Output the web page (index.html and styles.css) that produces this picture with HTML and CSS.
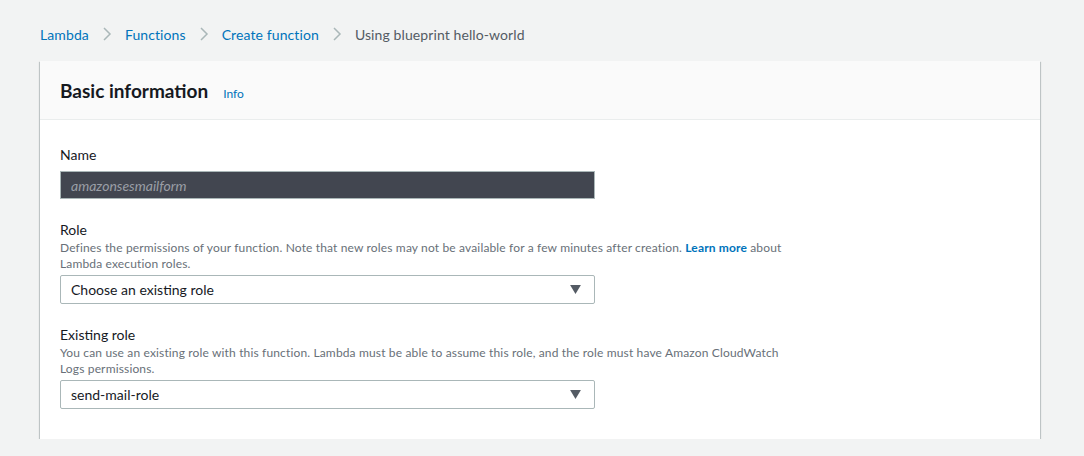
FILE: index.html
```html
<!DOCTYPE html>
<html lang="en">
<head>
<link rel="stylesheet" href="styles.css">
</head>
<body>
  <nav class="breadcrumbs">
    <a href="#">Lambda</a>
    <svg class="crumb-sep" viewBox="0 0 10 16"><path d="M2 2l6 6-6 6" fill="none" stroke="currentColor" stroke-width="1.5"/></svg>
    <a href="#">Functions</a>
    <svg class="crumb-sep" viewBox="0 0 10 16"><path d="M2 2l6 6-6 6" fill="none" stroke="currentColor" stroke-width="1.5"/></svg>
    <a href="#">Create function</a>
    <svg class="crumb-sep" viewBox="0 0 10 16"><path d="M2 2l6 6-6 6" fill="none" stroke="currentColor" stroke-width="1.5"/></svg>
    <span class="crumb-current">Using blueprint hello-world</span>
  </nav>

  <div class="panel">
    <div class="panel-header">
      <h2>Basic information</h2>
      <a class="info-link" href="#">Info</a>
    </div>
    <div class="panel-body">
      <div class="field">
        <label>Name</label>
        <input class="text-input" type="text" placeholder="amazonsesmailform" disabled>
      </div>

      <div class="field">
        <label>Role</label>
        <p class="hint">Defines the permissions of your function. Note that new roles may not be available for a few minutes after creation. <a href="#">Learn more</a> about Lambda execution roles.</p>
        <div class="select-box">
          <span>Choose an existing role</span>
          <svg class="caret" viewBox="0 0 12 10"><path d="M0 0h12L6 10z" fill="currentColor"/></svg>
        </div>
      </div>

      <div class="field">
        <label>Existing role</label>
        <p class="hint">You can use an existing role with this function. Lambda must be able to assume this role, and the role must have Amazon CloudWatch Logs permissions.</p>
        <div class="select-box">
          <span>send-mail-role</span>
          <svg class="caret" viewBox="0 0 12 10"><path d="M0 0h12L6 10z" fill="currentColor"/></svg>
        </div>
      </div>
    </div>
  </div>
</body>
</html>
```

FILE: styles.css
```css
body {
  margin: 0;
  padding: 23px 44px 0 40px;
  background: #f2f3f3;
  font-family: Lato, "Open Sans", sans-serif;
  color: #16191f;
}

a {
  color: #0073bb;
  text-decoration: none;
}

.breadcrumbs {
  display: flex;
  align-items: center;
  height: 22px;
  font-size: 14px;
  letter-spacing: 0.1px;
  gap: 13px;
}

.crumb-sep {
  width: 10px;
  height: 16px;
  color: #aab7b8;
}

.crumb-current {
  color: #545b64;
}

.panel {
  margin-top: 16px;
  background: white;
  box-shadow: 0 1px 1px 0 rgba(0,28,36,0.45), 1px 1px 1px 0 rgba(0,28,36,0.15), -1px 1px 1px 0 rgba(0,28,36,0.15);
}

.panel-header {
  display: flex;
  align-items: baseline;
  gap: 15px;
  height: 59px;
  box-sizing: border-box;
  padding: 18px 20px 0;
  background: #fafafa;
  border-bottom: 1px solid #eaeded;
}

.panel-header h2 {
  margin: 0;
  font-size: 19px;
  font-weight: 700;
}

.info-link {
  font-size: 12px;
}

.panel-body {
  padding: 25px 20px 30px;
  display: flex;
  flex-direction: column;
  gap: 21px;
}

.field label {
  display: block;
  font-size: 14px;
  line-height: 20px;
}

.field label + .text-input {
  margin-top: 6px;
}

.hint {
  margin: 0 0 3px;
  font-size: 12px;
  line-height: 16px;
  letter-spacing: 0.15px;
  color: #687078;
  max-width: 730px;
}

.hint a {
  font-weight: 700;
}

.text-input {
  display: block;
  width: 535px;
  height: 28px;
  box-sizing: border-box;
  border: 1px solid #aab7b8;
  background: #424650;
  padding: 0 10px;
  font-family: inherit;
  font-size: 14px;
  font-style: italic;
}

.text-input::placeholder {
  color: #9a9ea6;
}

.select-box {
  display: flex;
  align-items: center;
  justify-content: space-between;
  width: 535px;
  height: 29px;
  box-sizing: border-box;
  border: 1px solid #aab7b8;
  border-radius: 2px;
  padding: 0 13px 0 10px;
  font-size: 14px;
}

.caret {
  width: 11px;
  height: 9px;
  color: #545b64;
}
```
